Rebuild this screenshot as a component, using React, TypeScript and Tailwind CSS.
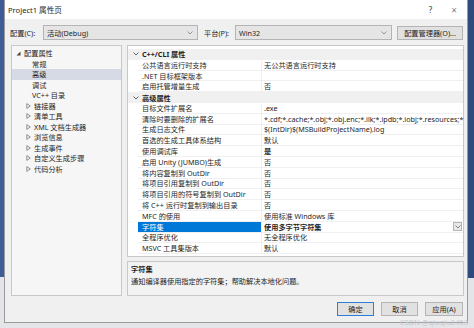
import { ReactNode } from 'react'

type Row =
  | { kind: 'header'; label: string }
  | { kind: 'prop'; name: string; value: string; bold?: boolean; selected?: boolean }

const rows: Row[] = [
  { kind: 'header', label: 'C++/CLI 属性' },
  { kind: 'prop', name: '公共语言运行时支持', value: '无公共语言运行时支持' },
  { kind: 'prop', name: '.NET 目标框架版本', value: '' },
  { kind: 'prop', name: '启用托管增量生成', value: '否' },
  { kind: 'header', label: '高级属性' },
  { kind: 'prop', name: '目标文件扩展名', value: '.exe' },
  { kind: 'prop', name: '清除时要删除的扩展名', value: '*.cdf;*.cache;*.obj;*.obj.enc;*.ilk;*.ipdb;*.iobj;*.resources;*' },
  { kind: 'prop', name: '生成日志文件', value: '$(IntDir)$(MSBuildProjectName).log' },
  { kind: 'prop', name: '首选的生成工具体系结构', value: '默认' },
  { kind: 'prop', name: '使用调试库', value: '是', bold: true },
  { kind: 'prop', name: '启用 Unity (JUMBO)生成', value: '否' },
  { kind: 'prop', name: '将内容复制到 OutDir', value: '否' },
  { kind: 'prop', name: '将项目引用复制到 OutDir', value: '否' },
  { kind: 'prop', name: '将项目引用的符号复制到 OutDir', value: '否' },
  { kind: 'prop', name: '将 C++ 运行时复制到输出目录', value: '否' },
  { kind: 'prop', name: 'MFC 的使用', value: '使用标准 Windows 库' },
  { kind: 'prop', name: '字符集', value: '使用多字节字符集', bold: true, selected: true },
  { kind: 'prop', name: '全程序优化', value: '无全程序优化' },
  { kind: 'prop', name: 'MSVC 工具集版本', value: '默认' },
]

const treeChildren = ['常规', '高级', '调试', 'VC++ 目录']
const treeCollapsed = ['链接器', '清单工具', 'XML 文档生成器', '浏览信息', '生成事件', '自定义生成步骤', '代码分析']

function Chevron({ className }: { className?: string }) {
  return (
    <svg width="6" height="4" viewBox="0 0 6 4" className={className}>
      <path d="M0.5 0.5 L3 3 L5.5 0.5" fill="none" stroke="currentColor" strokeWidth="0.9" />
    </svg>
  )
}

function Combo({ text, width }: { text: string; width: string }) {
  return (
    <div
      className={`flex h-[15px] ${width} items-center justify-between border border-[#b4b4b4] bg-[#e5e5e5] pl-[3px] pr-[4px]`}
    >
      <span>{text}</span>
      <Chevron className="text-[#8a8a8a]" />
    </div>
  )
}

function Btn({ children, width, focused }: { children: ReactNode; width: string; focused?: boolean }) {
  return (
    <div
      className={`flex h-[14px] ${width} items-center justify-center bg-[#e1e1e1] ${
        focused ? 'border border-[#2b7fd6]' : 'border border-[#b4b4b4]'
      }`}
    >
      {children}
    </div>
  )
}

export default function App() {
  return (
    <div className="relative flex h-[328px] w-[474px] overflow-hidden bg-[#e4e5e8] font-['Noto_Sans','Noto_Sans_CJK_SC',sans-serif] text-[7.2px] leading-[10px] text-[#1e1e1e]">
      <div className="h-[277px] w-[4px] shrink-0 bg-[#3e5c95]" />

      <div className="flex h-[323px] w-[464px] shrink-0 flex-col border-x border-b border-[#9a9a9a] bg-[#f0f0f0]">
        {/* title bar */}
        <div className="flex h-[19px] items-center justify-between bg-white pl-[3px] pr-[10px] text-[7.6px]">
          <span>Project1 属性页</span>
          <div className="flex items-center gap-[19px] text-[#333]">
            <span className="text-[8px]">?</span>
            <span className="text-[10px] font-light">×</span>
          </div>
        </div>

        {/* config row */}
        <div className="mt-[6px] flex h-[15px] items-center pl-[5px]">
          <span className="w-[33px]">配置(C):</span>
          <Combo text="活动(Debug)" width="w-[155px]" />
          <span className="ml-[6px] w-[31px]">平台(P):</span>
          <Combo text="Win32" width="w-[157px]" />
          <div className="ml-[5px]">
            <Btn width="w-[66px]">配置管理器(O)...</Btn>
          </div>
        </div>

        {/* main */}
        <div className="mt-[5px] flex pl-[6px]">
          {/* tree */}
          <div className="h-[251px] w-[111px] border border-[#c8c8c8] bg-[#f6f6f6] pt-[2px]">
            <div className="flex h-[10.5px] items-center pl-[4px]">
              <svg width="5" height="5" viewBox="0 0 5 5" className="mr-[3px]">
                <polygon points="4.5,0.5 4.5,4.5 0.5,4.5" fill="#444" />
              </svg>
              <span>配置属性</span>
            </div>
            {treeChildren.map((t) => (
              <div
                key={t}
                className={`flex h-[10.5px] items-center pl-[20px] ${t === '高级' ? 'bg-[#d6dae4]' : ''}`}
              >
                {t}
              </div>
            ))}
            {treeCollapsed.map((t) => (
              <div key={t} className="flex h-[10.5px] items-center pl-[14px]">
                <svg width="5" height="6" viewBox="0 0 5 6" className="mr-[3px]">
                  <polygon points="0.8,0.6 4.3,3 0.8,5.4" fill="none" stroke="#777" strokeWidth="0.8" />
                </svg>
                <span>{t}</span>
              </div>
            ))}
          </div>

          {/* grid + description */}
          <div className="ml-[5px] flex w-[337px] flex-col">
            <div className="h-[212px] border border-[#c8c8c8] bg-white pt-[3px]">
              {rows.map((r, i) =>
                r.kind === 'header' ? (
                  <div key={i} className="flex h-[10.8px] items-center bg-[#f0f0f0] font-bold">
                    <span className="flex w-[14px] justify-center pl-[2px]">
                      <Chevron className="text-[#555]" />
                    </span>
                    <span>{r.label}</span>
                  </div>
                ) : (
                  <div key={i} className="flex h-[10.8px]">
                    <span className="w-[10px] shrink-0" />
                    <span
                      className={`flex w-[124px] shrink-0 items-center border-b border-r border-[#f0f0f0] pl-[4px] whitespace-nowrap ${
                        r.selected ? 'bg-[#0078d7] text-white' : ''
                      }`}
                    >
                      {r.name}
                    </span>
                    <span
                      className={`flex min-w-0 flex-1 items-center justify-between border-b border-[#f0f0f0] pl-[2px] whitespace-nowrap ${
                        r.bold ? 'font-bold' : ''
                      }`}
                    >
                      <span>{r.value}</span>
                      {r.selected && (
                        <span className="mr-[1px] flex h-[9px] w-[9px] shrink-0 items-center justify-center border border-[#b4b4b4] bg-[#e8e8e8]">
                          <Chevron className="text-[#777]" />
                        </span>
                      )}
                    </span>
                  </div>
                ),
              )}
            </div>
            <div className="mt-[4px] h-[35px] border border-[#c8c8c8] bg-[#f3f3f3] pl-[3px] pt-[2px]">
              <div className="font-bold">字符集</div>
              <div className="mt-[2px]">通知编译器使用指定的字符集；帮助解决本地化问题。</div>
            </div>
          </div>
        </div>

        {/* buttons */}
        <div className="mt-[6px] flex justify-end gap-[7px] pr-[4px]">
          <Btn width="w-[37px]" focused>
            确定
          </Btn>
          <Btn width="w-[37px]">取消</Btn>
          <Btn width="w-[38px]">应用(A)</Btn>
        </div>
      </div>

      <div className="h-[278px] w-[6px] shrink-0 bg-[#2f4b7e]" />

      <span className="absolute right-[6px] bottom-[1px] text-[7.5px] text-[#c4c7ce]">CSDN @qiuqiu2453</span>
    </div>
  )
}
